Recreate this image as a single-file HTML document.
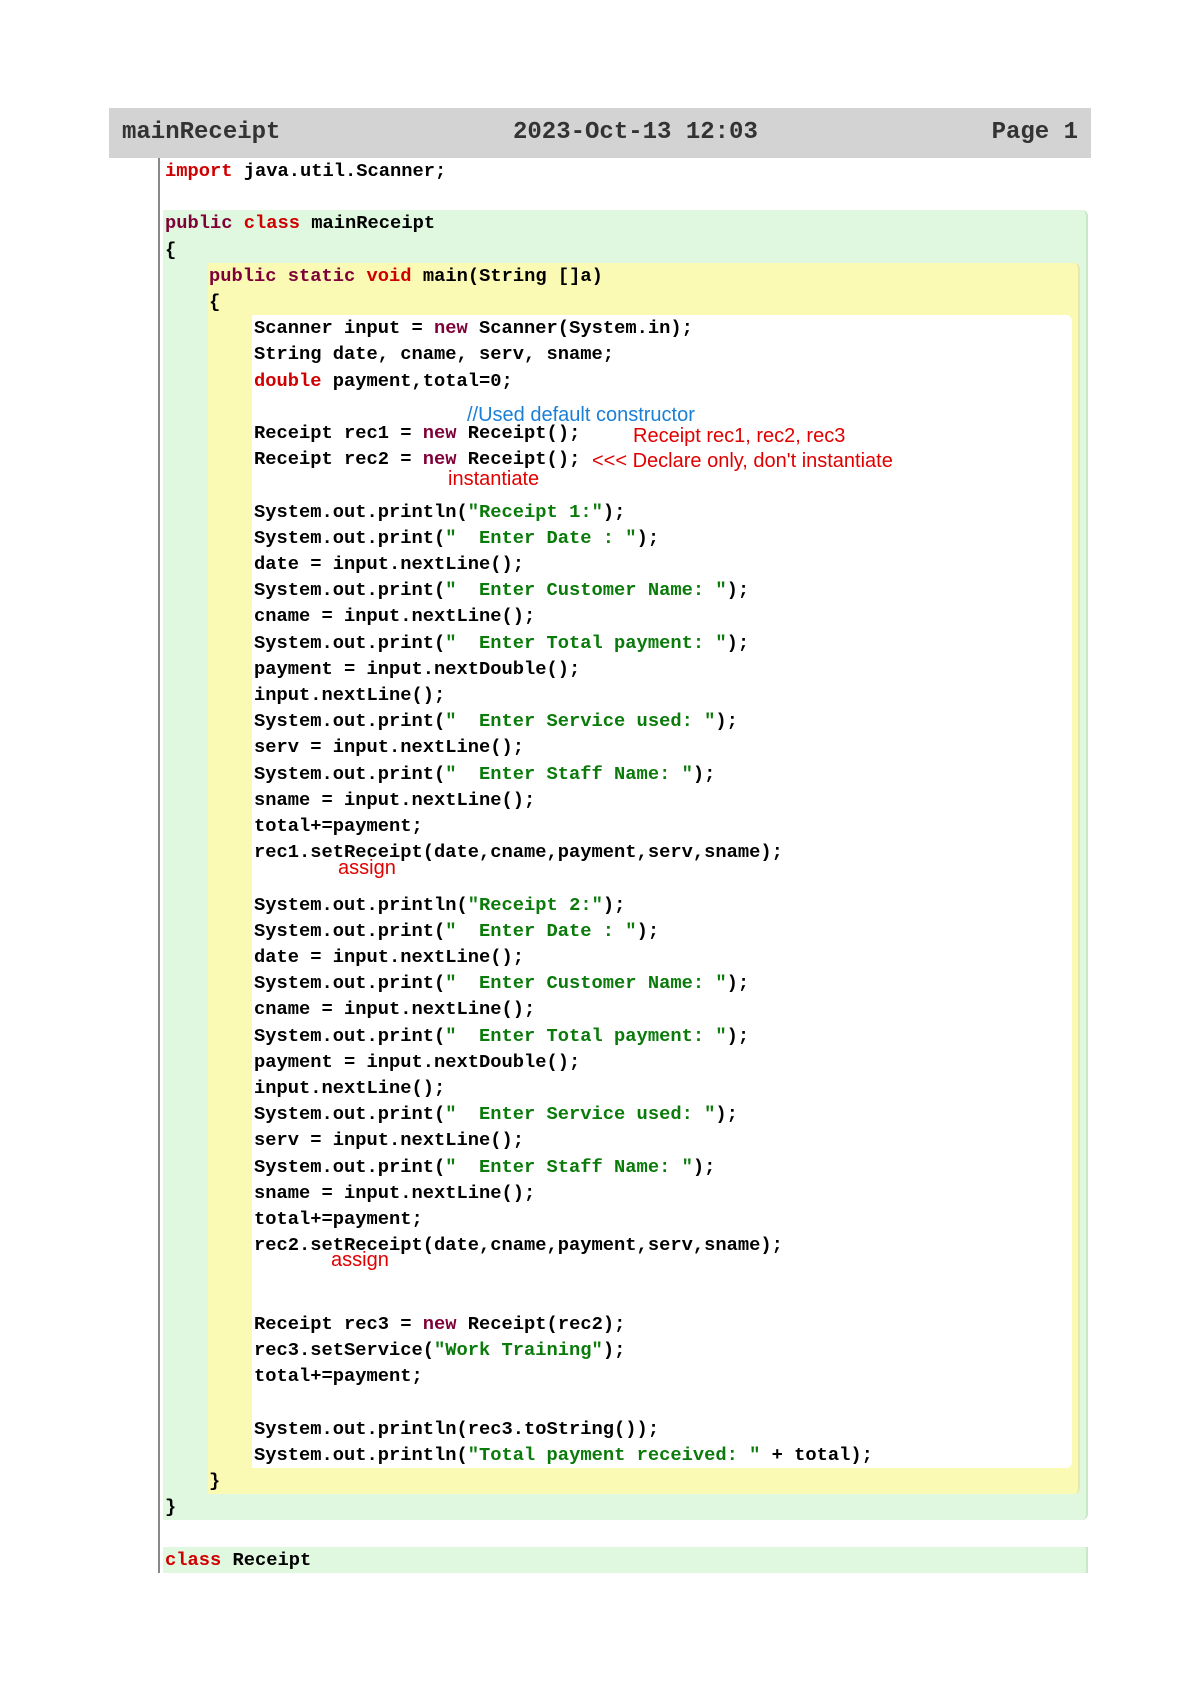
<!DOCTYPE html>
<html><head><meta charset="utf-8"><style>
body{margin:0;width:1200px;height:1696px;background:#fff;position:relative;overflow:hidden}
.hd{position:absolute;left:109px;top:108px;width:982px;height:50px;background:#d3d3d3;font:bold 24px "Liberation Mono",monospace;color:#333}
.hd span{position:absolute;top:11px}
.bx{position:absolute}
.l{position:absolute;font:bold 18.75px/26.2px "Liberation Mono",monospace;color:#000;white-space:pre;height:26.2px}
.k{color:#7f0038}.r{color:#d00000}.s{color:#0a7a0a}
.a{position:absolute;font:20px "Liberation Sans",sans-serif;white-space:pre;line-height:20px}
</style></head><body>
<div class="hd"><span style="left:13px">mainReceipt</span><span style="left:404px">2023-Oct-13 12:03</span><span style="right:13px">Page 1</span></div>
<div class="bx" style="left:158px;top:158px;width:2px;height:1415px;background:#888"></div>
<div class="bx" style="left:163px;top:210px;width:923px;height:1310px;background:#e0f8e0;border-right:2px solid #c8e8c8;border-radius:0 6px 6px 0"></div>
<div class="bx" style="left:208px;top:263px;width:870px;height:1231px;background:#fafab4;border-right:2px solid #e8e8a8;border-radius:0 6px 6px 0"></div>
<div class="bx" style="left:252px;top:315px;width:820px;height:1153px;background:#fff;border-radius:0 6px 6px 0"></div>
<div class="bx" style="left:163px;top:1547px;width:923px;height:26px;background:#e0f8e0;border-right:2px solid #c8e8c8"></div>
<div id="c"></div>
<div class="a" style="left:467px;top:405px;color:#1a7fd6">//Used default constructor</div>
<div class="a" style="left:633px;top:426px;color:#e00000">Receipt rec1, rec2, rec3</div>
<div class="a" style="left:592px;top:451px;color:#e00000">&lt;&lt;&lt; Declare only, don't instantiate</div>
<div class="a" style="left:448px;top:469px;color:#e00000">instantiate</div>
<div class="a" style="left:338px;top:858px;color:#e00000">assign</div>
<div class="a" style="left:331px;top:1250px;color:#e00000">assign</div>
<script>
var L=[
[0,0,'<span class="r">import</span> java.util.Scanner;'],
[2,0,'<span class="k">public</span> <span class="r">class</span> mainReceipt'],
[3,0,'{'],
[4,1,'<span class="k">public static</span> <span class="r">void</span> main(String []a)'],
[5,1,'{'],
[6,2,'Scanner input = <span class="k">new</span> Scanner(System.in);'],
[7,2,'String date, cname, serv, sname;'],
[8,2,'<span class="r">double</span> payment,total=0;'],
[10,2,'Receipt rec1 = <span class="k">new</span> Receipt();'],
[11,2,'Receipt rec2 = <span class="k">new</span> Receipt();'],
[44,2,'Receipt rec3 = <span class="k">new</span> Receipt(rec2);'],
[45,2,'rec3.setService(<span class="s">"Work Training"</span>);'],
[46,2,'total+=payment;'],
[48,2,'System.out.println(rec3.toString());'],
[49,2,'System.out.println(<span class="s">"Total payment received: "</span> + total);'],
[50,1,'}'],[51,0,'}'],
[53,0,'<span class="r">class</span> Receipt']];
function blk(s,n){return [
[s,2,'System.out.println(<span class="s">"Receipt '+n+':"</span>);'],
[s+1,2,'System.out.print(<span class="s">"  Enter Date : "</span>);'],
[s+2,2,'date = input.nextLine();'],
[s+3,2,'System.out.print(<span class="s">"  Enter Customer Name: "</span>);'],
[s+4,2,'cname = input.nextLine();'],
[s+5,2,'System.out.print(<span class="s">"  Enter Total payment: "</span>);'],
[s+6,2,'payment = input.nextDouble();'],
[s+7,2,'input.nextLine();'],
[s+8,2,'System.out.print(<span class="s">"  Enter Service used: "</span>);'],
[s+9,2,'serv = input.nextLine();'],
[s+10,2,'System.out.print(<span class="s">"  Enter Staff Name: "</span>);'],
[s+11,2,'sname = input.nextLine();'],
[s+12,2,'total+=payment;'],
[s+13,2,'rec'+n+'.setReceipt(date,cname,payment,serv,sname);']];}
L=L.concat(blk(13,1),blk(28,2));
var h='',x=[165,209,254];
L.forEach(function(e){h+='<div class="l" style="left:'+x[e[1]]+'px;top:'+(158+26.2*e[0]).toFixed(1)+'px">'+e[2]+'</div>';});
document.getElementById('c').innerHTML=h;
</script>
</body></html>
